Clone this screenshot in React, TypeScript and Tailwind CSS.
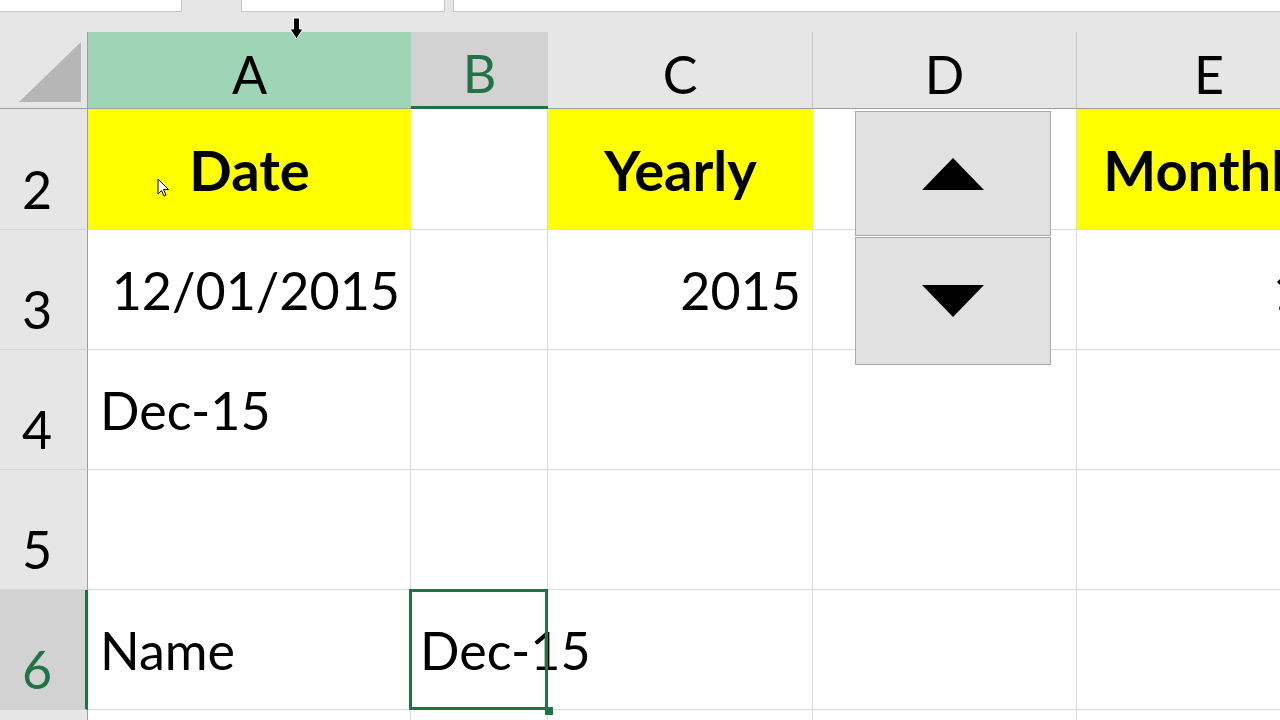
import React from 'react';

const font = { fontFamily: 'Lato, "Open Sans", sans-serif' };

const cols = ['A', 'B', 'C', 'D', 'E'];

const SpinButton = () => (
  <div className="absolute left-[855px] top-[111px] flex w-[196px] flex-col">
    <div className="flex h-[125px] items-center justify-center border border-[#a9a9a9] bg-[#e1e1e1]">
      <svg width="62" height="32" viewBox="0 0 62 32">
        <path d="M31 0 L62 32 L0 32 Z" fill="#000" />
      </svg>
    </div>
    <div className="mt-[1px] flex h-[128px] items-center justify-center border border-[#a9a9a9] bg-[#e1e1e1]">
      <svg width="62" height="32" viewBox="0 0 62 32">
        <path d="M0 0 L62 0 L31 32 Z" fill="#000" />
      </svg>
    </div>
  </div>
);

const RowHead = ({ n, active }: { n: number; active?: boolean }) =>
  active ? (
    <div className="flex items-end border-b border-r-[3px] border-b-[#d4d4d4] border-r-[#217346] bg-[#d2d2d2] pb-[14px] pl-[22px] text-[#217346]">
      {n}
    </div>
  ) : (
    <div className="flex items-end border-b border-r border-b-[#d4d4d4] border-r-[#9e9e9e] bg-[#e6e6e6] pb-[14px] pl-[22px]">
      {n}
    </div>
  );

const Cell = () => <div className="border-b border-r border-[#dadada]" />;

export default function App() {
  return (
    <div className="relative h-[720px] w-[1280px] overflow-hidden bg-white text-black" style={font}>
      {/* formula bar strip */}
      <div className="flex h-[32px] items-start gap-[8px] bg-[#e6e6e6]">
        <div className="h-[12px] w-[182px] border-b border-r border-[#c8c8c8] bg-white" />
        <div className="ml-[51px] h-[12px] w-[204px] border-x border-b border-[#c8c8c8] bg-white" />
        <div className="h-[12px] flex-1 border-b border-l border-[#c8c8c8] bg-white" />
      </div>

      <div className="grid grid-cols-[88px_323px_137px_265px_264px_264px] grid-rows-[77px_121px_120px_120px_120px_120px_120px] text-[52px] leading-none">
        {/* header row */}
        <div className="flex items-end justify-end border-b border-r border-[#9e9e9e] bg-[#e6e6e6] pb-[6px] pr-[6px]">
          <svg width="62" height="60" viewBox="0 0 62 60">
            <path d="M62 0 L62 60 L0 60 Z" fill="#b6b6b6" />
          </svg>
        </div>
        <div className="flex items-center justify-center border-b border-[#9e9e9e] bg-[#9fd5b7] pt-[8px]">A</div>
        <div className="flex items-center justify-center border-b-[3px] border-[#217346] bg-[#d2d2d2] pt-[8px] text-[#217346]">B</div>
        <div className="flex items-center justify-center border-b border-r border-b-[#9e9e9e] border-r-[#c4c4c4] bg-[#e6e6e6] pt-[8px]">C</div>
        <div className="flex items-center justify-center border-b border-r border-b-[#9e9e9e] border-r-[#c4c4c4] bg-[#e6e6e6] pt-[8px]">D</div>
        <div className="flex items-center justify-center border-b border-[#9e9e9e] bg-[#e6e6e6] pt-[8px]">E</div>

        {/* row 2 */}
        <RowHead n={2} />
        <div className="flex items-center justify-center bg-[#ffff00] text-[56px] font-bold">Date</div>
        <Cell />
        <div className="flex items-center justify-center bg-[#ffff00] text-[56px] font-bold">Yearly</div>
        <Cell />
        <div className="flex items-center justify-center whitespace-nowrap bg-[#ffff00] text-[56px] font-bold">Monthly</div>

        {/* row 3 */}
        <RowHead n={3} />
        <div className="flex items-center justify-end border-b border-r border-[#dadada] pr-[10px]">12/01/2015</div>
        <Cell />
        <div className="flex items-center justify-end border-b border-r border-[#dadada] pr-[11px]">2015</div>
        <Cell />
        <div className="flex items-center justify-end border-b border-r border-[#dadada] pr-[7px]">12</div>

        {/* row 4 */}
        <RowHead n={4} />
        <div className="flex items-center border-b border-r border-[#dadada] pl-[12px]">Dec-15</div>
        <Cell />
        <Cell />
        <Cell />
        <Cell />

        {/* row 5 */}
        <RowHead n={5} />
        <Cell />
        <Cell />
        <Cell />
        <Cell />
        <Cell />

        {/* row 6 */}
        <RowHead n={6} active />
        <div className="flex items-center border-b border-r border-[#dadada] pl-[12px]">Name</div>
        <div className="relative -ml-[2px] -mt-[1px] flex items-center whitespace-nowrap pl-[11px]">
          Dec-15
          <span className="absolute inset-0 border-[3px] border-[#217346]" />
          <span className="absolute -bottom-[5px] -right-[5px] h-[8px] w-[8px] bg-[#217346]" />
        </div>
        <Cell />
        <Cell />
        <Cell />

        {/* row 7 */}
        <div className="border-r border-[#9e9e9e] bg-[#e6e6e6]" />
        {cols.map((c) => (
          <div key={c} className="border-r border-[#dadada]" />
        ))}
      </div>

      <SpinButton />

      {/* column select cursor */}
      <svg className="absolute left-[289px] top-[17px]" width="15" height="23" viewBox="0 0 15 23">
        <path d="M4.5 1 H10.5 V12 H14 L7.5 22 L1 12 H4.5 Z" fill="#000" stroke="#fff" strokeWidth="1" />
      </svg>

      {/* mouse pointer */}
      <svg className="absolute left-[157px] top-[178px]" width="13" height="20" viewBox="0 0 13 20">
        <path d="M1 1 L1 16 L4.5 12.5 L7 18 L9 17 L6.5 11.5 L11.5 11.5 Z" fill="#fff" stroke="#000" strokeWidth="1" />
      </svg>
    </div>
  );
}
